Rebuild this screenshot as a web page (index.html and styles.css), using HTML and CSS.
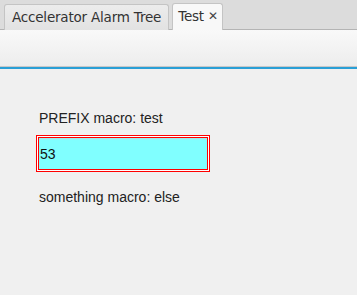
FILE: index.html
```html
<!DOCTYPE html>
<html>
<head>
<meta charset="utf-8">
<link rel="stylesheet" href="styles.css">
</head>
<body>
<div class="tabbar">
  <div class="tab">Accelerator Alarm Tree</div>
  <div class="tab selected">Test <span class="close">✕</span></div>
</div>
<div class="toolbar"></div>
<div class="content">
  <div class="label">PREFIX macro: test</div>
  <div class="field-outer">
    <div class="field-inner">
      <div class="field">53</div>
    </div>
  </div>
  <div class="label second">something macro: else</div>
</div>
</body>
</html>
```

FILE: styles.css
```css
html, body {
  margin: 0;
  padding: 0;
  width: 357px;
  height: 295px;
  overflow: hidden;
  background: #f0f0f0;
}
.tabbar {
  height: 30px;
  box-sizing: border-box;
  background: #dcdcdc;
  border-bottom: 1px solid #b4b4b4;
  display: flex;
  align-items: flex-end;
  padding-left: 4px;
  gap: 3px;
}
.tab {
  height: 26px;
  box-sizing: border-box;
  border: 1px solid #c4c4c4;
  border-bottom: none;
  border-radius: 3px 3px 0 0;
  background: linear-gradient(#ececec, #e2e2e2);
  font-family: "DejaVu Sans", sans-serif;
  font-size: 13.5px;
  letter-spacing: -0.2px;
  color: #333;
  padding: 0 7px 1px 7px;
  display: flex;
  align-items: center;
  margin-bottom: -1px;
}
.tab.selected {
  background: #f8f8f8;
  height: 27px;
  padding: 0 4px 2px 5px;
}
.close {
  margin-left: 4px;
  font-size: 12px;
  color: #444;
}
.toolbar {
  height: 37px;
  background: linear-gradient(#f9f9f9, #ededed);
  border-bottom: 1px solid #c8c8c8;
  box-sizing: border-box;
}
.content {
  border-top: 2px solid #2a9fd6;
  padding: 41px 0 0 36px;
  font-family: "Liberation Sans", Arial, sans-serif;
  font-size: 14px;
  color: #222;
}
.label {
  line-height: 16px;
  margin-left: 3px;
}
.field-outer {
  margin-top: 9px;
  width: 174px;
  height: 37px;
  box-sizing: border-box;
  border: 1px solid #ff0000;
  padding: 1px;
  background: #ffffff;
}
.field-inner {
  height: 100%;
  box-sizing: border-box;
  border: 1px solid #ff0000;
  background: #80ffff;
}
.field {
  height: 100%;
  box-sizing: border-box;
  background: linear-gradient(#b0dede, #80ffff 2px);
  color: #111;
  padding-left: 1px;
  line-height: 32px;
}
.label.second {
  margin-top: 17px;
}
```
